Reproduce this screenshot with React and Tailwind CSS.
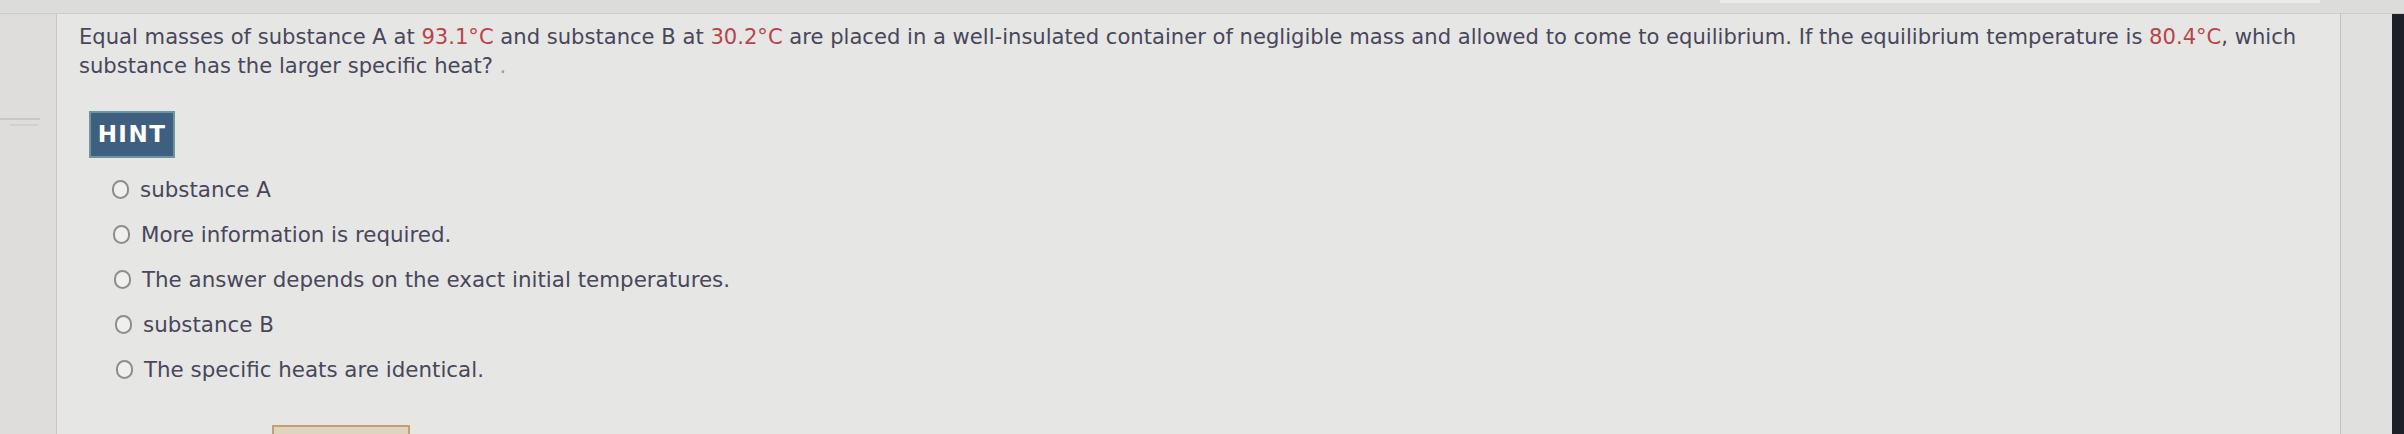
import React from "react";

const font = { fontFamily: '"DejaVu Sans", Verdana, sans-serif' };

function Radio({ label, shift }) {
  return (
    <div className={`flex items-center h-[45px] ${shift}`}>
      <span className="w-[17px] h-[19px] rounded-full border-2 border-[#8d8d8f] bg-[#efefed] shrink-0" />
      <span className="ml-[11px] text-[21.4px] text-[#48475b] leading-none">{label}</span>
    </div>
  );
}

export default function App() {
  return (
    <div className="w-[2404px] h-[434px] bg-[#e5e5e3] flex flex-col overflow-hidden" style={font}>
      <div className="h-[14px] shrink-0 bg-[#dcdcda] border-b border-[#cdcdcb] flex">
        <div className="ml-[1720px] w-[600px] h-[3px] bg-[#e9ebec]" />
      </div>
      <div className="flex flex-1 min-h-0">
        <div className="w-[57px] shrink-0 bg-[#dedddb] border-r border-[#c6c6c4] relative">
          <div className="absolute left-0 top-[104px] w-[40px] h-[2px] bg-[#c9c9c9]" />
          <div className="absolute left-[10px] top-[110px] w-[28px] h-[2px] bg-[#d0d0d0]" />
        </div>
        <div className="flex-1 min-w-0 pl-[22px] pr-[12px] pt-[8px] bg-[#e6e6e4]">
          <p className="text-[21.1px] leading-[29px] text-[#48475b]">
            Equal masses of substance A at <span className="text-[#b8434c]">93.1°C</span> and substance B at{" "}
            <span className="text-[#b8434c]">30.2°C</span> are placed in a well-insulated container of negligible mass
            and allowed to come to equilibrium. If the equilibrium temperature is{" "}
            <span className="text-[#b8434c]">80.4°C</span>, which substance has the larger specific heat?{" "}
            <span className="text-[#9a9aa0]">.</span>
          </p>
          <div className="mt-[31px] ml-[10px] w-[86px] h-[47px] bg-[#3f5f80] border-2 border-[#6d969b] flex items-center justify-center">
            <span className="text-white font-bold text-[23px] tracking-[1.5px] leading-none">HINT</span>
          </div>
          <div className="mt-[9px] ml-[33px] flex flex-col">
            <Radio label="substance A" shift="" />
            <Radio label="More information is required." shift="ml-[1px]" />
            <Radio label="The answer depends on the exact initial temperatures." shift="ml-[2px]" />
            <Radio label="substance B" shift="ml-[3px]" />
            <Radio label="The specific heats are identical." shift="ml-[4px]" />
          </div>
          <div className="mt-[33px] ml-[193px] w-[138px] h-[20px] border-2 border-[#c49e78] bg-[#ded5c0]" />
        </div>
        <div className="w-[52px] shrink-0 bg-[#e0e0de] border-l border-[#c3c3c1]" />
        <div className="w-[12px] shrink-0 bg-[#1d2028]" />
      </div>
    </div>
  );
}
